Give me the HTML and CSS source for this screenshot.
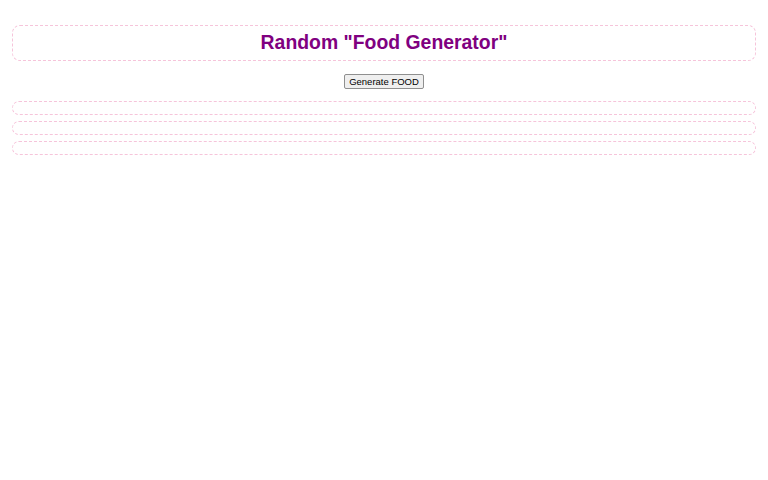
FILE: index.html
```html
<!DOCTYPE html>
<html lang="en">
<head>
    <meta charset="UTF-8">
    <meta name="viewport" content="width=device-width, initial-scale=1.0">
    <title>Random Food Generator</title>
    <link rel="stylesheet" href="styles.css">
</head>
<body>
    <div class="page">
        <div class="box title-box">
            <h1 class="title">Random "Food Generator"</h1>
        </div>

        <div class="actions">
            <button class="generate-button" onclick="generateFood()">Generate FOOD</button>
        </div>

        <!-- resultados -->
        <div class="results">
            <div class="box result" id="food1"></div>
            <div class="box result" id="food2"></div>
            <div class="box result" id="food3"></div>
        </div>
    </div>

    <script>
        const foods = ['Pizza', 'Sushi', 'Tacos', 'Burger', 'Pasta', 'Salad', 'Ramen', 'Curry', 'Pancakes'];

        function generateFood() {
            ['food1', 'food2', 'food3'].forEach(id => {
                const pick = foods[Math.floor(Math.random() * foods.length)];
                document.getElementById(id).textContent = pick;
            });
        }
    </script>
</body>
</html>
```

FILE: styles.css
```css
body, html {
    margin: 0;
    font-family: "Liberation Sans", Arial, sans-serif;
    background-color: #ffffff;
}

.page {
    display: flex;
    flex-direction: column;
    padding: 25px 12px;
}

.box {
    border: 1px dashed #f6c4da;
    border-radius: 8px;
    box-sizing: border-box;
}

.title-box {
    padding: 5px;
    height: 36px;
}

.title {
    margin: 0;
    font-size: 19.4px;
    line-height: 22px;
    font-weight: bold;
    color: #800080;
    text-align: center;
}

.actions {
    display: flex;
    justify-content: center;
    padding: 13px 0 12px;
}

.generate-button {
    font-family: "Liberation Sans", Arial, sans-serif;
    font-size: 9.5px;
    height: 15px;
    line-height: 10px;
    padding: 0 4px;
    border: 1px solid #8f8f8f;
    border-radius: 2px;
    background-color: #efefef;
    color: #000000;
    cursor: pointer;
}

.generate-button:hover {
    background-color: #e5e5e5;
}

.results {
    display: flex;
    flex-direction: column;
    gap: 6px;
}

.result {
    min-height: 14px;
    font-size: 12px;
    padding: 0 8px;
}
```
